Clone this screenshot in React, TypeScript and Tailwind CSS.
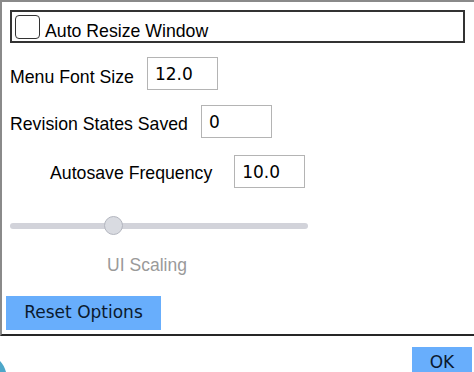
import React, { useState } from 'react';

const sans = { fontFamily: '"Liberation Sans", Arial, sans-serif' };
const lucida = { fontFamily: '"DejaVu Sans", "Noto Sans", sans-serif' };

const Field: React.FC<{ label: string; value: string; className?: string; gap: string; drop: string }> = ({ label, value, className = '', gap, drop }) => (
  <div className={`flex items-center ${className}`}>
    <span className={`text-[17.7px] leading-5 text-black ${drop}`} style={sans}>{label}</span>
    <div
      className={`${gap} w-[71px] h-[33px] border-[1.5px] border-[#b4b4b4] bg-white flex items-center pl-[7px] pt-[2px] text-[17px] text-black`}
      style={lucida}
    >
      {value}
    </div>
  </div>
);

export default function App() {
  const [autoResize, setAutoResize] = useState(false);

  return (
    <div className="w-[474px] h-[372px] bg-white overflow-hidden relative">
      <div className="h-[336px] border-t-2 border-l-2 border-[#8a8a8a] border-b-2 border-b-[#262626] pl-2">
        {/* Auto resize */}
        <button
          onClick={() => setAutoResize(!autoResize)}
          className="mt-2 w-[455px] h-[33px] border-2 border-[#333] flex items-center pl-[3px] gap-[5px]"
        >
          <span className="w-[25px] h-[24px] rounded-[4px] border-[1.5px] border-[#333] bg-white flex items-center justify-center text-sm">
            {autoResize ? '✓' : ''}
          </span>
          <span className="text-[17.7px] leading-5 text-black pt-[8px]" style={sans}>Auto Resize Window</span>
        </button>

        <Field label="Menu Font Size" value="12.0" className="mt-[14px]" gap="ml-[13px]" drop="pt-[6px]" />
        <Field label="Revision States Saved" value="0" className="mt-[15px]" gap="ml-[13px]" drop="pt-[5px]" />
        <Field label="Autosave Frequency" value="10.0" className="mt-[17px] pl-10" gap="ml-[22px]" drop="pt-[2px]" />

        {/* Slider */}
        <div className="mt-[28px] w-[298px] h-[19px] flex items-center relative">
          <div className="w-full h-[6px] rounded-full bg-[#d2d3da]" />
          <div className="absolute left-[94px] top-0 w-[19px] h-[19px] rounded-full bg-[#d9dbe1] border border-[#b3b6bf]" />
        </div>

        <div className="mt-5 w-[274px] text-center text-[17.5px] leading-5 text-[#9a9a9a]" style={sans}>
          UI Scaling
        </div>

        <button
          className="mt-[21px] -ml-[4px] w-[155px] h-[34px] bg-[#68aefc] text-[17px] text-[#0b1a2e] flex items-center justify-center"
          style={lucida}
        >
          Reset Options
        </button>
      </div>

      {/* Bottom bar */}
      <div className="flex justify-between items-start h-[36px]">
        <svg width="10" height="36" viewBox="0 0 10 36" className="shrink-0">
          <path d="M0 25 Q4 29 6 36 L0 36 Z" fill="#4da7c9" />
        </svg>
        <button
          className="mt-[11px] mr-[2px] w-[60px] h-[28px] pt-[3px] bg-[#68aefc] text-[17px] text-[#0b1a2e] flex items-center justify-center"
          style={lucida}
        >
          OK
        </button>
      </div>
    </div>
  );
}
